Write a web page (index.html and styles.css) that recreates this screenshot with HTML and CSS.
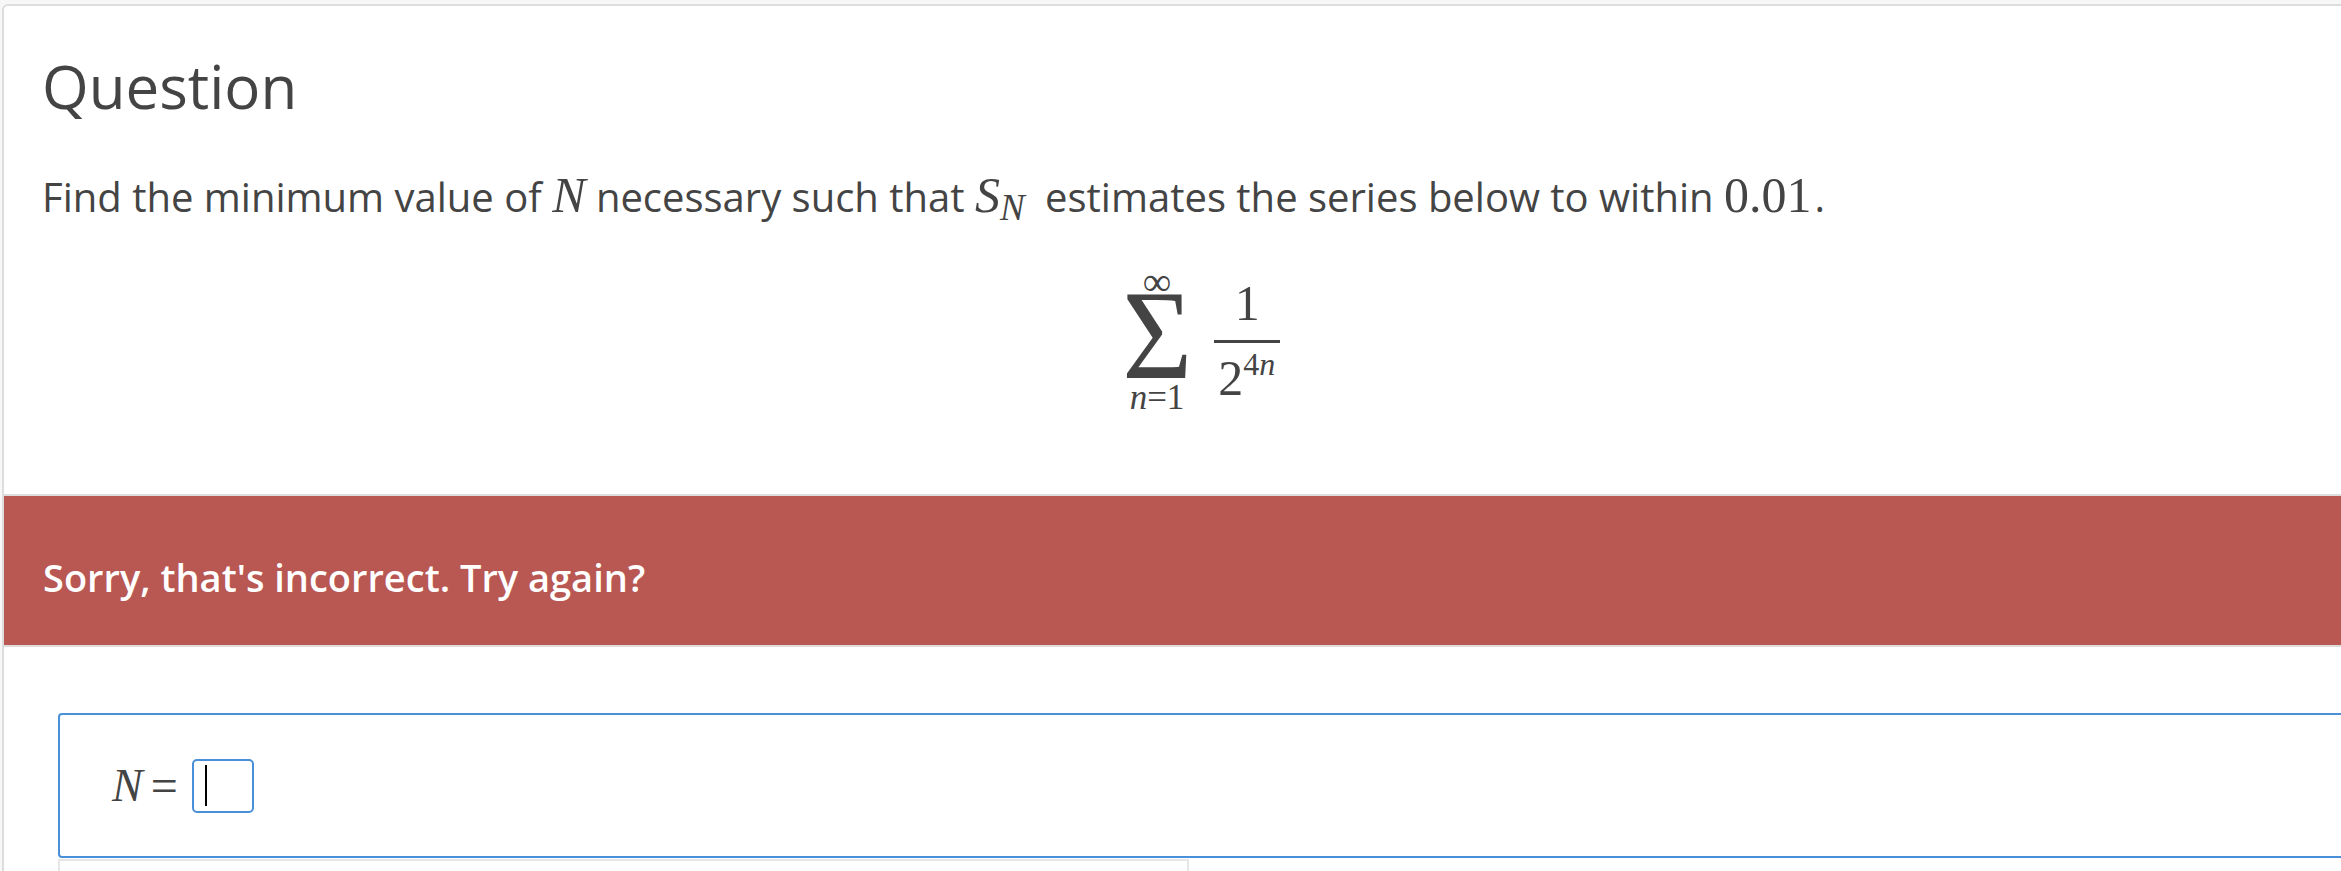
FILE: index.html
```html
<!DOCTYPE html>
<html lang="en">
<head>
    <meta charset="UTF-8">
    <meta name="viewport" content="width=device-width, initial-scale=1.0">
    <title>Question</title>
    <link rel="stylesheet" href="styles.css">
</head>
<body>
    <div class="card">
        <section class="question">
            <h1>Question</h1>
            <p class="prompt">Find the minimum value of <span class="mi">N</span> necessary such that <span class="mi">S<sub>N</sub></span> estimates the series below to within <span class="mn">0.01</span>.</p>
            <div class="display">
                <span class="sum">
                    <span class="lim-top">∞</span>
                    <span class="sigma">Σ</span>
                    <span class="lim-bottom"><i>n</i>=1</span>
                </span>
                <span class="frac">
                    <span class="num">1</span>
                    <span class="den">2<sup>4<i>n</i></sup></span>
                </span>
            </div>
        </section>

        <div class="feedback">Sorry, that's incorrect. Try again?</div>

        <section class="answer">
            <div class="answer-box">
                <span class="mi">N</span><span class="eq">=</span>
                <span class="blank"><span class="caret"></span></span>
            </div>
            <div class="next-panel"></div>
        </section>
    </div>
</body>
</html>
```

FILE: styles.css
```css
html, body {
    margin: 0;
    padding: 0;
}
body {
    background-color: #f7f7f7;
    font-family: "Open Sans", sans-serif;
    color: #444;
    padding-top: 4px;
    overflow: hidden;
}
.card {
    width: 2392px;
    margin-left: 2px;
    background: white;
    border: 2px solid #ddd;
    border-radius: 6px;
}
.question {
    padding: 40px 38px 79px;
}
h1 {
    margin: 0;
    font-size: 60px;
    font-weight: 500;
    line-height: 80px;
}
.prompt {
    margin: 39px 0 0;
    font-size: 40px;
    line-height: 60px;
}
.mi, .mn, .display, .answer-box {
    font-family: "Liberation Serif", serif;
}
.mi {
    font-style: italic;
    font-size: 50px;
}
.mn {
    font-size: 50px;
    margin-right: 3px;
}
.mi sub {
    font-size: 37px;
    line-height: 0;
    vertical-align: -8px;
    margin-right: 10px;
}
.display {
    margin-top: 38px;
    height: 150px;
    display: flex;
    justify-content: center;
    align-items: center;
    gap: 20px;
}
.sum {
    display: inline-flex;
    flex-direction: column;
    align-items: center;
}
.lim-top {
    font-size: 40px;
    line-height: 20px;
    margin-top: 10px;
}
.sigma {
    font-size: 128px;
    line-height: 86px;
    transform: scaleX(0.94);
}
.lim-bottom {
    font-size: 35px;
    line-height: 40px;
}
.frac {
    display: inline-flex;
    flex-direction: column;
    align-items: center;
    font-size: 50px;
}
.num {
    line-height: 50px;
    margin-bottom: 12px;
}
.den {
    align-self: stretch;
    padding: 10px 5px 0 4px;
    border-top: 3px solid #444;
    line-height: 50px;
    text-align: center;
}
.den sup {
    font-size: 32px;
    line-height: 0;
    vertical-align: 20px;
}
.feedback {
    background-color: #b95753;
    border-top: 2px solid #ddd;
    border-bottom: 2px solid #ddd;
    color: white;
    font-size: 38px;
    font-weight: 600;
    line-height: 60px;
    padding: 51px 39px 38px;
}
.answer {
    padding: 66px 0 0 54px;
}
.answer-box {
    height: 141px;
    display: flex;
    align-items: center;
    padding-left: 52px;
    border: 2px solid #4a90d9;
    border-radius: 4px;
}
.answer-box .mi {
    font-size: 46px;
}
.eq {
    font-size: 48px;
    margin: 0 14px 0 8px;
}
.blank {
    width: 47px;
    height: 50px;
    padding-left: 11px;
    display: flex;
    align-items: center;
    border: 2px solid #4a90d9;
    border-radius: 5px;
}
.caret {
    width: 2px;
    height: 41px;
    background-color: black;
}
.next-panel {
    width: 1127px;
    height: 60px;
    margin-top: 1px;
    border: 2px solid #e6e6e6;
    border-bottom: none;
}
```
